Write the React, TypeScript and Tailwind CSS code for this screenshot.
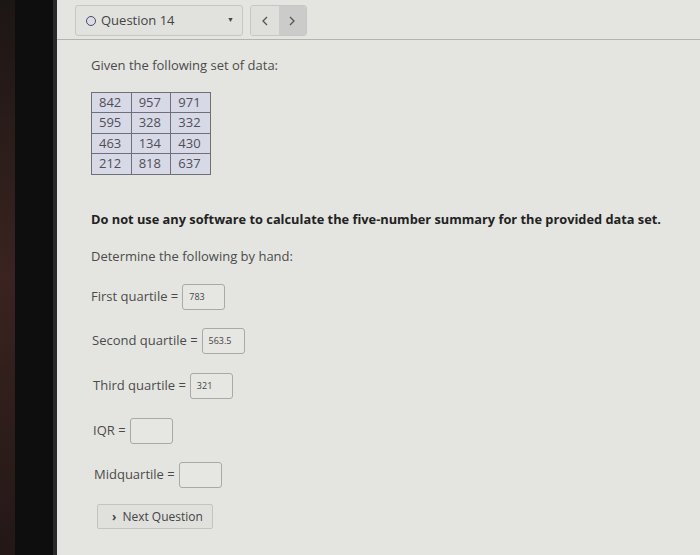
import React from 'react';

const data = [
  [842, 957, 971],
  [595, 328, 332],
  [463, 134, 430],
  [212, 818, 637],
];

interface AnswerRowProps {
  label: string;
  value?: string;
  className?: string;
}

const AnswerRow: React.FC<AnswerRowProps> = ({ label, value, className }) => (
  <div className={`flex items-center ${className ?? ''}`}>
    <span className="text-[13px] text-[#4b4b4b]">{label} =</span>
    <div className="ml-[4px] flex h-[26px] w-[43px] items-center rounded-[3px] border border-[#a9aaa7] bg-[#e6e7e3] pl-[6px] text-[9px] text-[#444]">
      {value}
    </div>
  </div>
);

const Chevron: React.FC<{ dir: 'left' | 'right' }> = ({ dir }) => (
  <svg width="6" height="10" viewBox="0 0 6 10" fill="none" stroke="#555" strokeWidth="1.3">
    {dir === 'left' ? <polyline points="5,1 1,5 5,9" /> : <polyline points="1,1 5,5 1,9" />}
  </svg>
);

const App: React.FC = () => {
  return (
    <div
      className="flex h-[555px] w-[700px] overflow-hidden bg-[#e4e5e1]"
      style={{ fontFamily: '"Open Sans", "Noto Sans", sans-serif' }}
    >
      {/* bezel */}
      <div className="flex w-[57px] shrink-0">
        <div className="w-[15px] bg-gradient-to-b from-[#1c1614] via-[#3a2320] to-[#231816]" />
        <div className="flex-1 bg-[#0e0e0e]" />
        <div className="w-[4px] bg-[#2a2a2a]" />
      </div>

      <div className="flex flex-1 flex-col">
        {/* header */}
        <div className="flex h-[40px] items-start gap-[7px] border-b border-[#b3b4b1] pl-[18px] pt-[5px]">
          <div className="flex h-[31px] w-[168px] items-center rounded-[3px] border border-[#c6c7c4] bg-[#e1e2de] pl-[10px] pr-[8px]">
            <span className="h-[10px] w-[10px] rounded-full border-[1.5px] border-[#4a4a6a] bg-[#dcdce6]" />
            <span className="ml-[5px] text-[13px] text-[#444]">Question 14</span>
            <span className="ml-auto text-[7px] text-[#444]">▼</span>
          </div>
          <div className="flex h-[31px] w-[57px] overflow-hidden rounded-[3px] border border-[#c6c7c4]">
            <div className="flex flex-1 items-center justify-center bg-[#dfe0dc]">
              <Chevron dir="left" />
            </div>
            <div className="flex flex-1 items-center justify-center bg-[#cbccc9]">
              <Chevron dir="right" />
            </div>
          </div>
        </div>

        {/* content */}
        <div className="flex flex-col pl-[34px]">
          <p className="mt-[16px] text-[13px] text-[#4b4b4b]">Given the following set of data:</p>

          <table className="mt-[16px] w-[120px] border-collapse border border-[#6e6f78] bg-[#d8d9e6] text-[13px] text-[#4f4f58]">
            <tbody>
              {data.map((row, i) => (
                <tr key={i} className="h-[20.5px]">
                  {row.map((n, j) => (
                    <td key={j} className="border border-[#6e6f78] px-[7px] py-0 text-left leading-[19px]">
                      {n}
                    </td>
                  ))}
                </tr>
              ))}
            </tbody>
          </table>

          <p className="mt-[35px] text-[12.8px] font-bold text-[#222]">
            Do not use any software to calculate the five-number summary for the provided data set.
          </p>
          <p className="mt-[18px] text-[13px] text-[#4b4b4b]">Determine the following by hand:</p>

          <AnswerRow className="mt-[18px]" label="First quartile" value="783" />
          <AnswerRow className="mt-[18px] pl-[1px]" label="Second quartile" value="563.5" />
          <AnswerRow className="mt-[19px] pl-[2px]" label="Third quartile" value="321" />
          <AnswerRow className="mt-[19px] pl-[2px]" label="IQR" />
          <AnswerRow className="mt-[18px] pl-[3px]" label="Midquartile" />

          <button className="ml-[6px] mt-[16px] flex h-[25px] w-[116px] items-center rounded-[2px] border border-[#c3c4c1] bg-[#e0e1dd] pl-[14px] text-[12px] text-[#444]">
            <span className="mr-[6px] text-[12px] font-bold">›</span>Next Question
          </button>
        </div>
      </div>
    </div>
  );
};

export default App;
